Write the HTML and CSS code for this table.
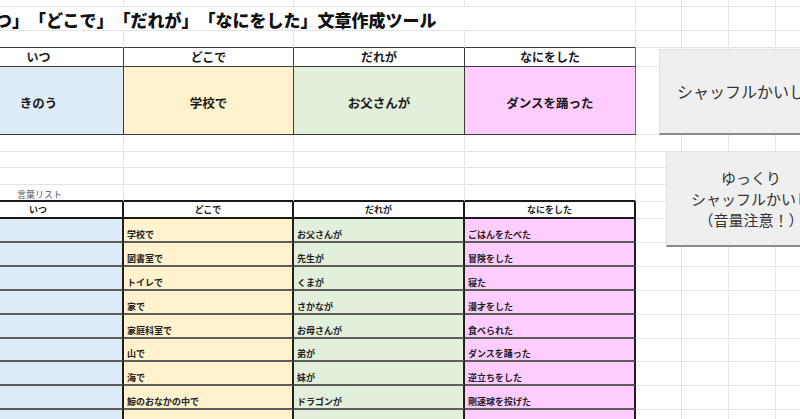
FILE: index.html
```html
<!DOCTYPE html>
<html lang="ja">
<head>
<meta charset="utf-8">
<title>文章作成ツール</title>
<link rel="stylesheet" href="styles.css">
</head>
<body>
<div class="page">
  <table class="sheet">
    <colgroup>
      <col class="wa"><col class="wb"><col class="wc"><col class="wd">
      <col class="we"><col class="wf"><col class="wg"><col class="wh">
    </colgroup>
    <tr class="r0"><td></td><td></td><td></td><td></td><td></td><td></td><td></td><td></td></tr>
    <tr class="r1"><td colspan="3" class="title">「いつ」「どこで」「だれが」「なにをした」文章作成ツール</td><td></td><td></td><td></td><td></td><td></td></tr>
    <tr class="r2"><td class="above"></td><td class="above"></td><td class="above"></td><td class="above"></td><td></td><td></td><td></td><td></td></tr>
    <tr class="r3"><td class="th">いつ</td><td class="th">どこで</td><td class="th">だれが</td><td class="th last">なにをした</td><td></td><td></td><td></td><td></td></tr>
    <tr class="r4"><td class="big blue">きのう</td><td class="big yellow">学校で</td><td class="big green">お父さんが</td><td class="big pink last">ダンスを踊った</td><td></td><td></td><td></td><td></td></tr>
    <tr class="r5"><td></td><td></td><td></td><td></td><td></td><td></td><td></td><td></td></tr>
    <tr class="r6"><td></td><td></td><td></td><td></td><td></td><td></td><td></td><td></td></tr>
    <tr class="r7"><td></td><td></td><td></td><td></td><td></td><td></td><td></td><td></td></tr>
    <tr class="r8"><td class="above2 label">言葉リスト</td><td class="above2"></td><td class="above2"></td><td class="above2"></td><td></td><td></td><td></td><td></td></tr>
    <tr class="r9"><td class="lh">いつ</td><td class="lh">どこで</td><td class="lh">だれが</td><td class="lh">なにをした</td><td></td><td></td><td></td><td></td></tr>
    <tr class="rl"><td class="li blue"></td><td class="li yellow">学校で</td><td class="li green">お父さんが</td><td class="li pink">ごはんをたべた</td><td></td><td></td><td></td><td></td></tr>
    <tr class="rl"><td class="li blue"></td><td class="li yellow">図書室で</td><td class="li green">先生が</td><td class="li pink">冒険をした</td><td></td><td></td><td></td><td></td></tr>
    <tr class="rl"><td class="li blue"></td><td class="li yellow">トイレで</td><td class="li green">くまが</td><td class="li pink">寝た</td><td></td><td></td><td></td><td></td></tr>
    <tr class="rl"><td class="li blue"></td><td class="li yellow">家で</td><td class="li green">さかなが</td><td class="li pink">漫才をした</td><td></td><td></td><td></td><td></td></tr>
    <tr class="rl"><td class="li blue"></td><td class="li yellow">家庭科室で</td><td class="li green">お母さんが</td><td class="li pink">食べられた</td><td></td><td></td><td></td><td></td></tr>
    <tr class="rl rs"><td class="li blue"></td><td class="li yellow">山で</td><td class="li green">弟が</td><td class="li pink">ダンスを踊った</td><td></td><td></td><td></td><td></td></tr>
    <tr class="rl"><td class="li blue"></td><td class="li yellow">海で</td><td class="li green">妹が</td><td class="li pink">逆立ちをした</td><td></td><td></td><td></td><td></td></tr>
    <tr class="rl"><td class="li blue"></td><td class="li yellow">鯨のおなかの中で</td><td class="li green">ドラゴンが</td><td class="li pink">剛速球を投げた</td><td></td><td></td><td></td><td></td></tr>
    <tr class="rl"><td class="li blue"></td><td class="li yellow">宇宙で</td><td class="li green">宇宙人が</td><td class="li pink">空を飛んだ</td><td></td><td></td><td></td><td></td></tr>
  </table>

  <div class="btn btn-shuffle">シャッフルかいし</div>
  <div class="btn btn-slow">ゆっくり<br>シャッフルかいし<br>（音量注意！）</div>
</div>
</body>
</html>
```

FILE: styles.css
```css
html, body {
  margin: 0;
  padding: 0;
  background: #ffffff;
}

body {
  font-family: "Noto Sans CJK JP", "Noto Sans", sans-serif;
  color: #1a1a1a;
  text-spacing-trim: space-all;
}

.page {
  position: relative;
  width: 800px;
  height: 419px;
  overflow: hidden;
}

.sheet {
  margin-left: -46px;
  table-layout: fixed;
  border-collapse: separate;
  border-spacing: 0;
  width: 869px;
}

.wa { width: 170px; }
.wb { width: 170px; }
.wc { width: 171px; }
.wd { width: 171px; }
.we { width: 46px; }
.wf { width: 47px; }
.wg { width: 47px; }
.wh { width: 47px; }

.sheet td {
  box-sizing: border-box;
  padding: 0;
  border-right: 1px solid #e4e4e4;
  border-bottom: 1px solid #e4e4e4;
  font-size: 9px;
  line-height: 11px;
  white-space: nowrap;
  overflow: hidden;
}

.r0 { height: 7px; }
.r1 { height: 23px; }
.r2 { height: 17px; }
.r3 { height: 19px; }
.r4 { height: 68px; }
.r5 { height: 17px; }
.r6 { height: 16px; }
.r7 { height: 17px; }
.r8 { height: 15px; }
.r9 { height: 17px; }
.rl { height: 24px; }
.rs { height: 23px; }

.sheet td.title {
  border-right: none;
  padding-left: 7px;
  padding-top: 3px;
  font-size: 17px;
  line-height: 20px;
  font-weight: 900;
  color: #111;
  overflow: visible;
}

.sheet td.above {
  border-bottom: 1px solid #3a3a3a;
}

.sheet td.th {
  border-right: 1px solid #3a3a3a;
  border-bottom: 1px solid #3a3a3a;
  text-align: center;
  font-size: 12px;
  line-height: 14px;
  font-weight: 700;
  background: #ffffff;
}

.sheet td.big {
  border-right: 1px solid #3a3a3a;
  border-bottom: 1px solid #3a3a3a;
  text-align: center;
  font-size: 12.5px;
  line-height: 15px;
  font-weight: 700;
  padding-top: 3px;
}

.sheet td.last {
  border-right-color: #6a6a6a;
}

.sheet td.above2 {
  border-bottom: 2px solid #1a1a1a;
}

.sheet td.label {
  padding-left: 63px;
  padding-top: 4px;
  color: #555555;
  font-weight: 400;
  vertical-align: middle;
}

.sheet td.lh {
  border-right: 2px solid #1a1a1a;
  border-bottom: 2px solid #1a1a1a;
  text-align: center;
  font-weight: 700;
  background: #ffffff;
}

.sheet td.li {
  border-right: 2px solid #1f1f1f;
  border-bottom: 2px solid #5c5c5c;
  vertical-align: bottom;
  padding-left: 3px;
  padding-bottom: 1px;
  font-weight: 700;
  color: #222;
}

.blue { background: #ddebf7; }
.yellow { background: #fff2cc; }
.green { background: #e2efda; }
.pink { background: #ffccff; }

.btn {
  position: absolute;
  box-sizing: border-box;
  background: #efefef;
  border: 1px solid #e2e2e2;
  border-bottom: 2px solid #8a8a8a;
  color: #333333;
  text-align: center;
  white-space: nowrap;
  display: flex;
  align-items: center;
  justify-content: center;
}

.btn-shuffle {
  left: 659px;
  top: 49px;
  width: 164px;
  height: 86px;
  font-size: 16px;
  line-height: 21px;
}

.btn-slow {
  left: 666px;
  top: 151px;
  width: 170px;
  height: 96px;
  font-size: 15px;
  line-height: 21px;
}
```
